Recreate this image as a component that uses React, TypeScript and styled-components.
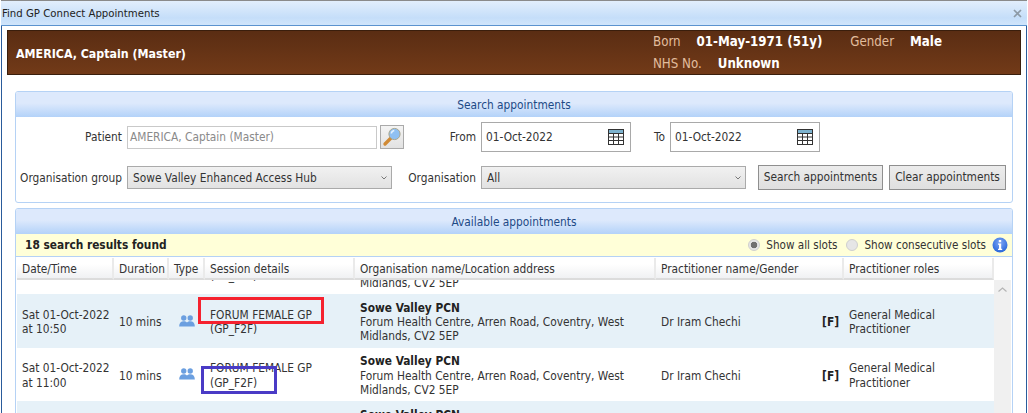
import React from "react";
import styled, { createGlobalStyle } from "styled-components";

const COLUMNS = "97px 55px 36px 150px 301px 188px 150px";

const GlobalStyle = createGlobalStyle`
  html, body {
    margin: 0;
    height: 413px;
    overflow: hidden;
    background: #fff;
  }
  body {
    font-family: "DejaVu Sans", Tahoma, sans-serif;
    font-stretch: condensed;
    font-size: 11.8px;
    color: #333;
  }
`;

const rows = [
  { date: "Sat 01-Oct-2022", time: "at 10:40", shaded: false, mark: "" },
  { date: "Sat 01-Oct-2022", time: "at 10:50", shaded: true, mark: "red" },
  { date: "Sat 01-Oct-2022", time: "at 11:00", shaded: false, mark: "blue" },
  { date: "Sat 01-Oct-2022", time: "at 11:10", shaded: true, mark: "" },
];

const SearchIcon = () => (
  <svg width="20" height="20" viewBox="0 0 20 20">
    <path d="M9.500 10.500 3 17" stroke="#d08a35" strokeWidth="3.400" strokeLinecap="round" />
    <circle cx="12.500" cy="7" r="5.600" fill="#8fc0f2" stroke="#a8a690" strokeWidth="1" />
    <path d="M9.300 6.500a3.600 3.600 0 0 1 3-3" stroke="#e4f2ff" strokeWidth="1.600" fill="none" />
  </svg>
);

const CalendarIcon = () => (
  <svg width="16" height="16" viewBox="0 0 16 16">
    <rect x="0.500" y="0.500" width="15" height="15" fill="#fff" stroke="#333" />
    <rect x="1" y="1" width="14" height="3" fill="#7db3cf" />
    <path d="M1 4.500h14M1 8h14M1 11.500h14M5.500 4.500v11M10.500 4.500v11" stroke="#333" fill="none" />
  </svg>
);

const PeopleIcon = () => (
  <svg width="16" height="12" viewBox="0 0 17 13">
    <g fill="#6b9fe0">
      <circle cx="5" cy="3.200" r="2.900" />
      <circle cx="12" cy="3.200" r="2.900" />
      <path d="M0 12.500c0-3.600 2-5.600 5-5.600 1.400 0 2.600.4 3.500 1.300.9-.9 2.100-1.300 3.500-1.300 3 0 5 2 5 5.600z" />
    </g>
  </svg>
);

const InfoIcon = () => (
  <svg width="16" height="16" viewBox="0 0 16 16">
    <defs>
      <radialGradient id="infoFill" cx="50%" cy="35%" r="70%">
        <stop offset="0" stopColor="#7fa8f5" />
        <stop offset="1" stopColor="#2262d8" />
      </radialGradient>
    </defs>
    <circle cx="8" cy="8" r="7.500" fill="url(#infoFill)" />
    <rect x="6.800" y="3" width="2.400" height="2.200" fill="#fff" />
    <path d="M6 6.500h3.200v5.300h1v1.200H6v-1.200h1V7.700H6z" fill="#fff" />
  </svg>
);

const CloseIcon = () => (
  <svg width="9" height="9" viewBox="0 0 9 9">
    <path d="M1 1l7 7M8 1 1 8" stroke="#8d9aa6" strokeWidth="1.700" />
  </svg>
);

const Chevron = () => (
  <svg width="6" height="4" viewBox="0 0 6 4">
    <path d="M.5.500 3 3 5.500.5" stroke="#777" fill="none" />
  </svg>
);

export default function App() {
  return (
    <>
      <GlobalStyle />
      <Dialog>
        <TitleBar>
          <span>Find GP Connect Appointments</span>
          <CloseIcon />
        </TitleBar>
        <DialogBody>
          <Banner>
            <PatientName>AMERICA, Captain (Master)</PatientName>
            <BannerFacts>
              <FactRow>
                <FactLabel>Born</FactLabel>
                <FactValue>01-May-1971 (51y)</FactValue>
                <FactLabel $offset>Gender</FactLabel>
                <FactValue>Male</FactValue>
              </FactRow>
              <FactRow>
                <FactLabel>NHS No.</FactLabel>
                <FactValue>Unknown</FactValue>
              </FactRow>
            </BannerFacts>
          </Banner>

          <Panel $height={112}>
            <PanelHeader>Search appointments</PanelHeader>
            <SearchForm>
              <FormRow $height={30}>
                <FieldLabel $width={107}>Patient</FieldLabel>
                <PatientInput>AMERICA, Captain (Master)</PatientInput>
                <SearchButton><SearchIcon /></SearchButton>
                <FieldLabel $width={73}>From</FieldLabel>
                <DateInput>
                  01-Oct-2022
                  <CalendarIcon />
                </DateInput>
                <FieldLabel $width={35}>To</FieldLabel>
                <DateInput>
                  01-Oct-2022
                  <CalendarIcon />
                </DateInput>
              </FormRow>
              <FormRow $height={25}>
                <FieldLabel $width={107}>Organisation group</FieldLabel>
                <SelectBox>
                  Sowe Valley Enhanced Access Hub
                  <Chevron />
                </SelectBox>
                <FieldLabel $width={85}>Organisation</FieldLabel>
                <SelectBox>
                  All
                  <Chevron />
                </SelectBox>
                <ActionButton $width={125} $left={12}>Search appointments</ActionButton>
                <ActionButton $width={117} $left={6}>Clear appointments</ActionButton>
              </FormRow>
            </SearchForm>
          </Panel>

          <Panel $height={220}>
            <PanelHeader>Available appointments</PanelHeader>
            <ResultsBar>
              <ResultCount>18 search results found</ResultCount>
              <SlotOptions>
                <Radio $checked />
                <span>Show all slots</span>
                <Radio />
                <span>Show consecutive slots</span>
                <InfoIcon />
              </SlotOptions>
            </ResultsBar>
            <GridHead>
              <HeadCell>Date/Time</HeadCell>
              <HeadCell>Duration</HeadCell>
              <HeadCell>Type</HeadCell>
              <HeadCell>Session details</HeadCell>
              <HeadCell>Organisation name/Location address</HeadCell>
              <HeadCell>Practitioner name/Gender</HeadCell>
              <HeadCell>Practitioner roles</HeadCell>
            </GridHead>
            <GridViewport>
              <GridRows>
                {rows.map((row) => (
                  <GridRow key={row.time} $shaded={row.shaded}>
                    <Cell>{row.date}<br />{row.time}</Cell>
                    <Cell>10 mins</Cell>
                    <IconCell><PeopleIcon /></IconCell>
                    <SessionCell>
                      FORUM FEMALE GP<br />(GP_F2F)
                      {row.mark === "red" && <RedMark />}
                      {row.mark === "blue" && <BlueMark />}
                    </SessionCell>
                    <Cell>
                      <OrgName>Sowe Valley PCN</OrgName>
                      Forum Health Centre, Arren Road, Coventry, West<br />
                      Midlands, CV2 5EP
                    </Cell>
                    <PractitionerCell>
                      Dr Iram Chechi
                      <b>[F]</b>
                    </PractitionerCell>
                    <Cell>General Medical<br />Practitioner</Cell>
                  </GridRow>
                ))}
              </GridRows>
              <ScrollTrack>
                <svg width="9" height="5" viewBox="0 0 9 5">
                  <path d="M.5 4.500 4.500 1l4 3.500" stroke="#b5b5b5" fill="none" strokeWidth="1.200" />
                </svg>
              </ScrollTrack>
            </GridViewport>
          </Panel>
        </DialogBody>
      </Dialog>
    </>
  );
}

const Dialog = styled.div`
  width: 1026px;
  height: 413px;
  margin-left: 1px;
  box-sizing: border-box;
  overflow: hidden;
  display: flex;
  flex-direction: column;
`;

const TitleBar = styled.div`
  flex: none;
  margin-left: -1px;
  width: 1028px;
  height: 26px;
  padding: 0 6px 0 2px;
  box-sizing: border-box;
  display: flex;
  align-items: center;
  justify-content: space-between;
  color: #222;
  font-size: 11.3px;
  background: linear-gradient(#e2eefc, #c5def9 70%, #d0e5fb);
  border-top: 1px solid #8a8a8a;
  border-bottom: 1px solid #5b93cf;
`;

const DialogBody = styled.div`
  flex: 1;
  border-left: 1px solid #2a5b9b;
  border-right: 1px solid #2a5b9b;
  padding: 4px 5px 0 5px;
  display: flex;
  flex-direction: column;
`;

const Banner = styled.div`
  height: 45px;
  flex: none;
  box-sizing: border-box;
  border: 1px solid #3a1e0c;
  background: linear-gradient(#5a2d13, #723a18);
  display: flex;
  justify-content: space-between;
  padding: 0 8px;
  color: #fff;
`;

const PatientName = styled.div`
  align-self: center;
  padding-top: 2px;
  font-weight: 700;
  font-size: 12.3px;
  color: #fff;
`;

const BannerFacts = styled.div`
  width: 359px;
  display: flex;
  flex-direction: column;
  gap: 8px;
  padding-top: 4px;
  font-size: 13.2px;
`;

const FactRow = styled.div`
  display: flex;
  gap: 16px;
  line-height: 14px;
`;

const FactLabel = styled.span<{ $offset?: boolean }>`
  color: #e2bd9d;
  margin-left: ${(p) => (p.$offset ? "12px" : "0")};
`;

const FactValue = styled.span`
  color: #fff;
  font-weight: 700;
`;

const Panel = styled.section<{ $height: number }>`
  height: ${(p) => p.$height}px;
  flex: none;
  box-sizing: border-box;
  margin: 16px 8px 0 8px;
  border: 1px solid #b5d2f5;
  border-radius: 3px;
  overflow: hidden;
  background: #fff;

  & + & {
    margin-top: 5px;
  }
`;

const PanelHeader = styled.div`
  height: 25px;
  line-height: 27px;
  text-align: center;
  color: #1d4a86;
  background: linear-gradient(#dde9fc 45%, #b3d2f9);
`;

const SearchForm = styled.div`
  display: flex;
  flex-direction: column;
  gap: 13px;
  padding-top: 5px;
`;

const FormRow = styled.div<{ $height: number }>`
  height: ${(p) => p.$height}px;
  display: flex;
  align-items: center;
`;

const FieldLabel = styled.span<{ $width: number }>`
  width: ${(p) => p.$width}px;
  flex: none;
  box-sizing: border-box;
  text-align: right;
  padding-right: 1px;
  color: #333;
  white-space: nowrap;
`;

const PatientInput = styled.div`
  width: 250px;
  height: 23px;
  margin-left: 4px;
  box-sizing: border-box;
  border: 1px solid #c9c9c9;
  color: #8a8a8a;
  line-height: 21px;
  padding-left: 2px;
`;

const SearchButton = styled.div`
  width: 24px;
  height: 24px;
  margin-left: 3px;
  box-sizing: border-box;
  border: 1px solid #aaa;
  background: linear-gradient(#f4f4f4, #e2e2e2);
  display: flex;
  align-items: center;
  justify-content: center;
`;

const DateInput = styled.div`
  width: 150px;
  height: 30px;
  margin-left: 4px;
  box-sizing: border-box;
  border: 1px solid #a9a9a9;
  padding: 0 6px 0 4px;
  display: flex;
  align-items: center;
  justify-content: space-between;
  color: #333;
`;

const SelectBox = styled.div`
  width: 265px;
  height: 23px;
  margin-left: 4px;
  box-sizing: border-box;
  border: 1px solid #aaa;
  background: linear-gradient(#f1f1f1, #e2e2e2);
  padding: 0 4px 0 5px;
  display: flex;
  align-items: center;
  justify-content: space-between;
  color: #333;
`;

const ActionButton = styled.div<{ $width: number; $left: number }>`
  width: ${(p) => p.$width}px;
  height: 25px;
  margin-left: ${(p) => p.$left}px;
  flex: none;
  box-sizing: border-box;
  border: 1px solid #8f8f8f;
  background: linear-gradient(#ececec, #dfdfdf);
  text-align: center;
  line-height: 23px;
  color: #333;
  white-space: nowrap;
`;

const ResultsBar = styled.div`
  height: 23px;
  box-sizing: border-box;
  background: #ffffd8;
  border-bottom: 1px solid #b5d2f5;
  display: flex;
  align-items: center;
  justify-content: space-between;
  padding: 0 4px 0 9px;
`;

const ResultCount = styled.span`
  font-weight: 700;
  color: #222;
`;

const SlotOptions = styled.div`
  display: flex;
  align-items: center;
  gap: 6px;
  font-size: 11.6px;

  span + div {
    margin-left: 3px;
  }
`;

const Radio = styled.div<{ $checked?: boolean }>`
  width: 12px;
  height: 12px;
  border-radius: 50%;
  box-sizing: border-box;
  border: 1px solid #cfcfcf;
  background: ${(p) =>
    p.$checked
      ? "radial-gradient(circle, #707070 0 3px, #e6e6e6 3.6px)"
      : "#e6e6e6"};
`;

const GridHead = styled.div`
  display: grid;
  grid-template-columns: ${COLUMNS};
  margin: 1px 0 0 1px;
  width: 977px;
  height: 22px;
`;

const HeadCell = styled.div`
  box-sizing: border-box;
  padding-left: 5px;
  line-height: 23px;
  white-space: nowrap;
  color: #333;
  background: linear-gradient(#fff 30%, #f0f1f3);
  border-bottom: 2px solid #dcdcdc;
  border-right: 2px solid #eaeaea;
  overflow: hidden;
`;

const GridViewport = styled.div`
  display: flex;
  height: 150px;
  overflow: hidden;
  margin-left: 1px;
`;

const GridRows = styled.div`
  width: 977px;
  flex: none;
  margin-top: -39.5px;
`;

const GridRow = styled.div<{ $shaded: boolean }>`
  display: grid;
  grid-template-columns: ${COLUMNS};
  height: 53.5px;
  background: ${(p) => (p.$shaded ? "#e6f1f8" : "#fff")};
`;

const Cell = styled.div`
  align-self: center;
  padding: 3px 0 0 5px;
  line-height: 14.3px;
  white-space: nowrap;
  color: #333;
`;

const IconCell = styled(Cell)`
  padding: 0 0 0 10px;
  display: flex;
  align-items: center;
`;

const SessionCell = styled(Cell)`
  position: relative;
`;

const OrgName = styled.div`
  font-weight: 700;
  color: #222;
`;

const PractitionerCell = styled(Cell)`
  display: flex;
  justify-content: space-between;
  padding-right: 5px;

  b {
    color: #222;
  }
`;

const RedMark = styled.div`
  position: absolute;
  left: -7px;
  top: -8px;
  width: 126px;
  height: 27px;
  box-sizing: border-box;
  border: 3px solid #f5222f;
`;

const BlueMark = styled.div`
  position: absolute;
  left: -4px;
  top: 8px;
  width: 76px;
  height: 28px;
  box-sizing: border-box;
  border: 3px solid #4a3bc6;
`;

const ScrollTrack = styled.div`
  width: 17px;
  flex: none;
  background: #f0f0f0;
  display: flex;
  justify-content: center;
  padding-top: 7px;
  box-sizing: border-box;

  svg {
    display: block;
  }
`;
